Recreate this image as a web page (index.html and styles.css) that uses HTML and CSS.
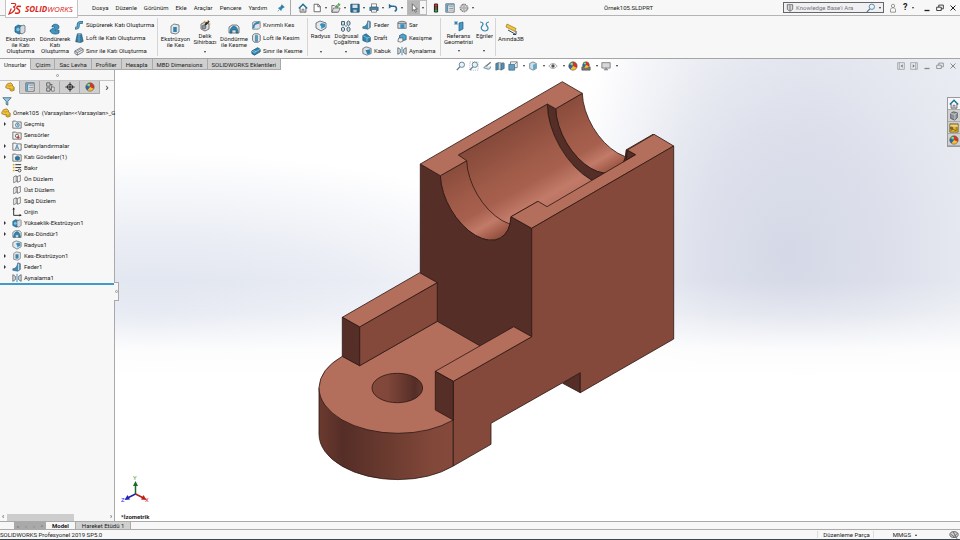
FILE: index.html
```html
<!DOCTYPE html>
<html lang="tr">
<head>
    <meta charset="UTF-8">
    <meta name="viewport" content="width=device-width, initial-scale=1.0">
    <title>Örnek105.SLDPRT</title>
    <link rel="stylesheet" href="styles.css">
</head>
<body>
    <!-- Icon set -->
    <svg class="sprite" aria-hidden="true">
        <symbol id="i-extrude" viewBox="0 0 12 12"><path d="M1 4l3-2 4 1v7l-3 1-4-2z" fill="#2f86b4" stroke="#1c5272" stroke-width=".7"/><path d="M7 3l3-1 1 1v6l-3 2-2-1V4z" fill="#d5dade" stroke="#55606a" stroke-width=".7"/><circle cx="4" cy="6.500" r="1.700" fill="#7fc2e2"/></symbol>
        <symbol id="i-revolve" viewBox="0 0 12 12"><path d="M3 3c2-3 7-2 7 1 0 2-2 3-4 3 0 1 2 1 4 0v3c-3 2-8 1-9-2 0-2 3-2 5-4-1-1-2 0-3 0z" fill="#3d96c4" stroke="#1c5272" stroke-width=".7"/></symbol>
        <symbol id="i-sweep" viewBox="0 0 12 12"><path d="M1.500 9.500c4 1 3.500-2 3.500-4s2-3 5.500-2.500" fill="none" stroke="#1c5272" stroke-width="3.400"/><path d="M2 9.500c3.500 1 3-2 3-4s2-3 5-2.500" fill="none" stroke="#55a9d2" stroke-width="2"/></symbol>
        <symbol id="i-loft" viewBox="0 0 12 12"><path d="M4 1h5l2 9-3 1.500-6-1z" fill="#357fa6" stroke="#1c4460" stroke-width=".7"/><path d="M4 1l2 1 3-1M6 2v9" stroke="#9fd0e8" stroke-width=".7" fill="none"/></symbol>
        <symbol id="i-boundary" viewBox="0 0 12 12"><path d="M1 6l7-4 3 2v3l-7 4-3-2zM1 6l3 2 7-4M4 8v3" fill="#e6e8ea" stroke="#5a6066" stroke-width=".9"/><path d="M3 6.500l6-3.500" stroke="#5a6066" stroke-width=".7"/></symbol>
        <symbol id="i-cut" viewBox="0 0 12 12"><path d="M2 3l3-2 5 1v7l-3 2-5-1z" fill="#e3e6e8" stroke="#636b72" stroke-width=".8"/><path d="M4 4h4v5H4z" fill="#4f9ec6"/><path d="M6 4v5" stroke="#26607f"/></symbol>
        <symbol id="i-hole" viewBox="0 0 12 12"><path d="M2 4l4-2 4 2v5l-4 2-4-2z" fill="#dcdfe2" stroke="#555" stroke-width=".8"/><circle cx="5" cy="7" r="2" fill="#8e979e" stroke="#444" stroke-width=".6"/><path d="M6 5l4-4" stroke="#26292c" stroke-width="2"/><path d="M8 1l1 1M10 4h1.500M5 1l1 1" stroke="#eb9d2f" stroke-width="1.200"/></symbol>
        <symbol id="i-cutrev" viewBox="0 0 12 12"><path d="M1 4l3-2h5l2 2v6H1z" fill="#dfe3e6" stroke="#566" stroke-width=".8"/><path d="M2 10c0-9 8-9 8 0H8V7H4v3z" fill="#2f86b4" stroke="#1c5272" stroke-width=".6"/></symbol>
        <symbol id="i-cutsweep" viewBox="0 0 12 12"><path d="M2 3l2-1h7v7l-2 2H2z" fill="#dfe3e6" stroke="#58646d" stroke-width=".8"/><path d="M3 10c0-5 2-6 7-7" fill="none" stroke="#2f86b4" stroke-width="2.200"/></symbol>
        <symbol id="i-cutloft" viewBox="0 0 12 12"><path d="M2 3l2-2h5l2 2v6l-2 2H4L2 9z" fill="#f1f2f3" stroke="#4c5358"/><path d="M5 3h3v7H5z" fill="#4f9ec6" stroke="#26607f" stroke-width=".5"/></symbol>
        <symbol id="i-cutbound" viewBox="0 0 12 12"><path d="M1 6l7-4 3 2v3l-7 4-3-2z" fill="#2f86b4" stroke="#1c4d69" stroke-width=".9"/><path d="M1 6l3 2 7-4M3 5l3 2" stroke="#a8d9ef" stroke-width=".8" fill="none"/></symbol>
        <symbol id="i-fillet" viewBox="0 0 12 12"><path d="M1 3l4-2 6 2v5l-5 3-5-3z" fill="#e5e8ea" stroke="#525a60" stroke-width=".8"/><path d="M5 5c0-2 3-2 5-1v3L6 9c1-2 0-3-1-4z" fill="#2f8fbe"/></symbol>
        <symbol id="i-pattern" viewBox="0 0 12 12"><g fill="#c8dce7" stroke="#3e5664" stroke-width=".9"><path d="M1.500 1.500h3v3.500h-3zM7 2l1.500-1L10 2v2.500L8.500 5.500 7 4.500zM1.500 8L3 7l1.500 1v2.500L3 11.500l-1.500-1zM7 8l1.500-1L10 8v2.500l-1.500 1-1.500-1z"/></g><path d="M5 6h2" stroke="#2f86b4"/></symbol>
        <symbol id="i-rib" viewBox="0 0 12 12"><path d="M7 1l3 1v7l-3 2-6-1V8c3 0 5-2 6-7z" fill="#3b8eb8" stroke="#3f5665" stroke-width=".7"/><path d="M8 2v8" stroke="#d2dde4" stroke-width="1.300"/></symbol>
        <symbol id="i-draft" viewBox="0 0 12 12"><path d="M1 3l4-2 5 4v5l-4 1-5-2z" fill="#2e85b1" stroke="#1f4d66" stroke-width=".8"/><path d="M1 3l5 3v5M6 6l4-1" fill="none" stroke="#a4d0e5" stroke-width=".8"/></symbol>
        <symbol id="i-shell" viewBox="0 0 12 12"><path d="M1 3l4-2 6 2v6l-5 2-5-2z" fill="#dfe3e6" stroke="#3e4b54" stroke-width=".8"/><path d="M4 5l6-1v5L6 10c0-3-1-3-2-5z" fill="#2882b0"/></symbol>
        <symbol id="i-wrap" viewBox="0 0 12 12"><path d="M1 3c2-2 8-2 10 0v7H1z" fill="#d1d7db" stroke="#444f57" stroke-width=".8"/><path d="M4 5h5v5H4z" fill="#3990bc"/><path d="M1 4h10" stroke="#444f57" stroke-width=".8"/></symbol>
        <symbol id="i-intersect" viewBox="0 0 12 12"><path d="M3 3l4-2 4 2v5l-3 1-5-1z" fill="#4fa3cc" stroke="#225672" stroke-width=".8"/><path d="M2 6h5v4l-3 1-3-1z" fill="#eef0f1" stroke="#4b5358" stroke-width=".8"/></symbol>
        <symbol id="i-mirror" viewBox="0 0 12 12"><path d="M1 2v8l3-2V4zM11 2v8L8 8V4z" fill="#dce1e4" stroke="#46545e" stroke-width=".9"/><path d="M6 1v10" stroke="#267ba8"/></symbol>
        <symbol id="i-ref" viewBox="0 0 12 12"><path d="M6 3l4-1v7l-4 2z" fill="#4599c4" stroke="#1f5f82" stroke-width=".7"/><path d="M1 3h4M3 1v4M1.500 1.500l3 3M4.500 1.500l-3 3" stroke="#2778a2" stroke-width=".8"/></symbol>
        <symbol id="i-curve" viewBox="0 0 12 12"><path d="M2 2c3 0 4 2 2 4s0 5 3 5 4-3 2-5 0-4 2-4" fill="none" stroke="#3386b0" stroke-width="1.200"/></symbol>
        <symbol id="i-instant" viewBox="0 0 12 12"><path d="M2 1l9 4.500-1 3L1 4z" fill="#f2c43c" stroke="#866510" stroke-width=".6"/><path d="M3 7l7 4M11 8v3.500H8" fill="none" stroke="#2d485a"/></symbol>
        <symbol id="i-home" viewBox="0 0 12 12"><path d="M2.500 6v5h7V6" fill="#f3f3f3" stroke="#444" stroke-width=".9"/><path d="M1 6.500L6 1.500l5 5" fill="none" stroke="#1f6f99" stroke-width="1.800"/><path d="M5 11V7.500h2V11" fill="#fff" stroke="#444" stroke-width=".8"/></symbol>
        <symbol id="i-new" viewBox="0 0 12 12"><path d="M2.500 1.500h5l2.500 2.500v6.500H2.500zM7 1.500v3h3" fill="#fff" stroke="#555"/></symbol>
        <symbol id="i-open" viewBox="0 0 12 12"><path d="M1 3h3l1 1h3v7H1z" fill="#eee" stroke="#555" stroke-width=".9"/><path d="M3 6h8l-2 5H1z" fill="#ddd" stroke="#555" stroke-width=".8"/><path d="M6 6c0-3 1-4 4-4M8.500.5L11 2 8.500 4" fill="none" stroke="#3a9c32" stroke-width="1.200"/></symbol>
        <symbol id="i-save" viewBox="0 0 12 12"><path d="M1 1.500h10v9.500H1z" fill="#2d7199" stroke="#234e68"/><path d="M3 2h6v4H3z" fill="#d9e1e6"/><path d="M4 8h4v3H4z" fill="#b8c6cf"/></symbol>
        <symbol id="i-print" viewBox="0 0 12 12"><path d="M3 1h6v4H3z" fill="#fff" stroke="#555" stroke-width=".8"/><path d="M1 5h10v4H1z" fill="#3f88b0" stroke="#2b566f" stroke-width=".8"/><path d="M3 8h6v3H3z" fill="#fff" stroke="#555" stroke-width=".8"/></symbol>
        <symbol id="i-undo" viewBox="0 0 12 12"><path d="M2 4h5c4 0 4 5 1 6" fill="none" stroke="#2a6c93" stroke-width="1.900"/><path d="M1 1v6l4-3z" fill="#2a6c93"/></symbol>
        <symbol id="i-cursor" viewBox="0 0 12 12"><path d="M4 1v8.500l2-1.800L7.500 11l1.300-.6L7.300 7.300H10z" fill="#fff" stroke="#444" stroke-width=".8"/></symbol>
        <symbol id="i-light" viewBox="0 0 12 12"><rect x="3.500" y=".5" width="5" height="11" rx="1.500" fill="#23282b"/><circle cx="6" cy="3" r="1.500" fill="#e2332c"/><circle cx="6" cy="6" r="1.100" fill="#8d7d25"/><circle cx="6" cy="9" r="1.500" fill="#3bb04a"/></symbol>
        <symbol id="i-list" viewBox="0 0 12 12"><path d="M1 1h10v10H1z" fill="#fff" stroke="#4e5960"/><path d="M1.500 1.500H4v9H1.500zM4 1.500h6.500V3H4z" fill="#5b92b1"/><path d="M5 4.500h5M5 6.500h5M5 8.500h5" stroke="#4e5960" stroke-width=".8"/></symbol>
        <symbol id="i-gear" viewBox="0 0 12 12"><circle cx="6" cy="6" r="4.600" fill="none" stroke="#666" stroke-width="1.200" stroke-dasharray="2 .7"/><circle cx="6" cy="6" r="3.500" fill="#eee" stroke="#777" stroke-width=".7"/><circle cx="6" cy="6" r="1.500" fill="#fff" stroke="#555" stroke-width=".8"/></symbol>
        <symbol id="i-pin" viewBox="0 0 12 12"><path d="M7 2l3 3-1 .5-2 1-1 2.500-3-3 2.500-1 1-2zM4 8L2 10" fill="#2b7eab" stroke="#2b7eab" stroke-width=".8"/></symbol>
        <symbol id="i-part" viewBox="0 0 12 12"><path d="M1 5l2-3 4-1 2 2v2l2 1v4l-3 1-2-1V8H4L1 7z" fill="#eec03c" stroke="#8d6911" stroke-width=".8"/><path d="M3 4l2 1 3-1M6 8l2 1 3-1" fill="none" stroke="#a67c17" stroke-width=".7"/></symbol>
        <symbol id="i-config" viewBox="0 0 12 12"><path d="M2 1h4v4H2zM2 7h4v4H2zM6 3h3M6 9h2V4" fill="none" stroke="#555"/><path d="M8 6h3v5H8z" fill="#eee" stroke="#555" stroke-width=".8"/></symbol>
        <symbol id="i-target" viewBox="0 0 12 12"><circle cx="6" cy="6" r="3.200" fill="none" stroke="#222"/><path d="M6 .5v11M.5 6h11" stroke="#222" stroke-width="1.200"/></symbol>
        <symbol id="i-ball" viewBox="0 0 12 12"><circle cx="6" cy="6" r="5" fill="#f0c22e"/><path d="M6 6L1.500 4A5 5 0 0 1 6 1z" fill="#2f9c49"/><path d="M6 6V1a5 5 0 0 1 4.500 7z" fill="#d9322b"/><path d="M6 6L1.500 4A5 5 0 0 0 3 10z" fill="#2b64b6"/><circle cx="6" cy="6" r="5" fill="none" stroke="#555" stroke-width=".7"/><ellipse cx="4.500" cy="3.500" rx="1.600" ry="1" fill="#fff" opacity=".6"/></symbol>
        <symbol id="i-filter" viewBox="0 0 12 12"><path d="M1 2h10L7 6.500V11L5 10V6.500z" fill="#93c5df" stroke="#3b5f74" stroke-width=".9"/></symbol>
        <symbol id="i-folder" viewBox="0 0 12 12"><path d="M1 2.500h3.500l1 1H11V11H1z" fill="#f2f2f2" stroke="#555" stroke-width=".9"/></symbol>
        <symbol id="i-history" viewBox="0 0 12 12"><use href="#i-folder"/><circle cx="6.500" cy="7.200" r="2.400" fill="#c9e2ef" stroke="#2a7198" stroke-width=".8"/><path d="M6.500 5.500v2h1.500" fill="none" stroke="#2a7198" stroke-width=".8"/></symbol>
        <symbol id="i-sensor" viewBox="0 0 12 12"><use href="#i-folder"/><circle cx="6" cy="7" r="2" fill="none" stroke="#333" stroke-width=".8"/><circle cx="7.500" cy="9" r="1.500" fill="#d6362d"/></symbol>
        <symbol id="i-note" viewBox="0 0 12 12"><use href="#i-folder"/><path d="M4 10l2-5.500L8 10M4.700 8.300h2.600" fill="none" stroke="#2377a5" stroke-width=".9"/></symbol>
        <symbol id="i-bodies" viewBox="0 0 12 12"><use href="#i-folder"/><path d="M4 6l2.500-1L9 6v3l-2.500 1L4 9z" fill="#2377a5" stroke="#174b69" stroke-width=".6"/></symbol>
        <symbol id="i-material" viewBox="0 0 12 12"><path d="M1 2h2M1 5.500h2M1 9h2" stroke="#dfa520" stroke-width="1.800"/><path d="M4 2h7M4 5.500h7M4 9h3" stroke="#333" stroke-width="1.200"/><circle cx="9" cy="9" r="1.700" fill="#eee" stroke="#333"/></symbol>
        <symbol id="i-plane" viewBox="0 0 12 12"><path d="M2 3.500l3-1.500v7L2 10.500zM5 3h1.500M5 8.500h1.500M6.500 3L10 1.500v7L6.500 10z" fill="none" stroke="#666" stroke-width=".9"/></symbol>
        <symbol id="i-origin" viewBox="0 0 12 12"><path d="M2 1v9h9" fill="none" stroke="#222" stroke-width="1.100"/><path d="M.5 3L2 .5 3.500 3zM9 8.500l2.500 1.500L9 11.500z" fill="#222"/></symbol>
        <symbol id="i-search" viewBox="0 0 12 12"><circle cx="7" cy="4.500" r="3.200" fill="#e8f2f8" stroke="#5a7f96" stroke-width="1.100"/><path d="M4.600 7L1 11" stroke="#5a7f96" stroke-width="1.600"/></symbol>
        <symbol id="i-zoomarea" viewBox="0 0 12 12"><path d="M1 1h10v10H1z" fill="none" stroke="#aaa" stroke-width=".8" stroke-dasharray="1.500 1"/><use href="#i-search"/></symbol>
        <symbol id="i-prev" viewBox="0 0 12 12"><path d="M10.500 1.500L5 6" stroke="#777" stroke-width="1.600"/><path d="M10 6.500c1 3-2 4-4 3L2 8l3-2.500 1 1.500" fill="#cfe2ec" stroke="#5a7c90"/></symbol>
        <symbol id="i-section" viewBox="0 0 12 12"><path d="M1 3l3-1v8l-3 1zM7 3l3-1 1 1v6l-4 2z" fill="#4f94b8" stroke="#44586a" stroke-width=".8"/><path d="M4 2h3v8H4z" fill="#c8d8e0" stroke="#44586a" stroke-width=".6"/></symbol>
        <symbol id="i-orient" viewBox="0 0 12 12"><path d="M1 4h7v7H1z" fill="#5da1c5" stroke="#44586a" stroke-width=".8"/><path d="M3 4V1h8v7H8M8 4l3-3" fill="none" stroke="#59636b" stroke-width=".9"/></symbol>
        <symbol id="i-cube" viewBox="0 0 12 12"><path d="M2 3l4-2 4 2v6l-4 2-4-2z" fill="#cfdfe8" stroke="#566873" stroke-width=".8"/><path d="M6 4.500L10 3v6l-4 2z" fill="#67a9ca"/></symbol>
        <symbol id="i-eye" viewBox="0 0 12 12"><path d="M1 6c3-4 7-4 10 0-3 4-7 4-10 0z" fill="#f5f5f5" stroke="#888" stroke-width=".8"/><circle cx="6" cy="6" r="2" fill="#555"/></symbol>
        <symbol id="i-scene" viewBox="0 0 12 12"><path d="M1 7h10v4H1z" fill="#777" stroke="#444" stroke-width=".7"/><g transform="scale(.8) translate(1.500 0)"><use href="#i-ball"/></g></symbol>
        <symbol id="i-screen" viewBox="0 0 12 12"><path d="M1 2h10v6.500H1z" fill="#d5d8da" stroke="#666" stroke-width=".9"/><path d="M6 8v2.500M3.500 10.500h5" stroke="#666"/></symbol>
        <symbol id="i-paneleft" viewBox="0 0 12 12"><path d="M2 2h8v8H2zM4 2v8" fill="none" stroke="#999" stroke-width=".9"/><path d="M8 4L5.500 6 8 8z" fill="#777"/></symbol>
        <symbol id="i-paneright" viewBox="0 0 12 12"><path d="M2 2h8v8H2zM8 2v8" fill="none" stroke="#999" stroke-width=".9"/><path d="M4.500 4L7 6 4.500 8z" fill="#777"/></symbol>
        <symbol id="i-min" viewBox="0 0 12 12"><path d="M3 9h6" stroke="currentColor" stroke-width="1.600"/></symbol>
        <symbol id="i-restore" viewBox="0 0 12 12"><path d="M2 5h5.500v4H2zM4.500 5V2.500H10V7H7.500" fill="none" stroke="currentColor"/></symbol>
        <symbol id="i-close" viewBox="0 0 12 12"><path d="M3 3l6 6M9 3l-6 6" stroke="currentColor" stroke-width="1.200"/></symbol>
        <symbol id="i-user" viewBox="0 0 12 12"><circle cx="6" cy="3.500" r="2" fill="none" stroke="#888"/><path d="M3 11V8c0-3 6-3 6 0v3z" fill="none" stroke="#888"/></symbol>
        <symbol id="i-box" viewBox="0 0 12 12"><path d="M2 3l3-2 5 1v6l-3 3-5-2z" fill="#8c9298" stroke="#3e4347" stroke-width=".8"/><path d="M2 3l5 1v7M7 4l3-2" fill="none" stroke="#e8e8e8" stroke-width=".7"/></symbol>
        <symbol id="i-book" viewBox="0 0 12 12"><path d="M1 1h10v10H1z" fill="#e6b42b" stroke="#6d5818" stroke-width=".9"/><path d="M1.500 3.500h9" stroke="#ddd" stroke-width="1.500"/><path d="M2 5h2v2H2zM8 6h2M2 9l3-2 2 2 3-1" stroke="#4e4630" fill="none"/></symbol>
        <symbol id="i-kb" viewBox="0 0 12 12"><path d="M2 1h8v7l-4 3-4-3z" fill="#ddd" stroke="#444"/><path d="M6 2v8" stroke="#444"/></symbol>
        <symbol id="i-globe" viewBox="0 0 12 12"><ellipse cx="6" cy="5.500" rx="5" ry="3.500" fill="#ccc" stroke="#555"/><path d="M2 5l4 3 4-4M5 2l3 6M8 8l2 3" fill="none" stroke="#555" stroke-width=".9"/></symbol>
    </svg>

    <header class="titlebar">
        <a class="logo" href="#">
            <svg class="logo-mark" viewBox="0 0 14 14" aria-hidden="true">
                <path d="M3 1.500h3.500c2 0 1.500 3-1.500 3.500C8.500 5 7 10 1 12l2.300-5.500" fill="none" stroke="#d9261c" stroke-width="1.200"/>
                <path d="M13 4.500c-5-1-5 1.500-3 2.700 3 2 1.500 5-3 3.800" fill="none" stroke="#d9261c" stroke-width="1.400"/>
            </svg>
            <span class="logo-text"><b>SOLID</b>WORKS</span>
        </a>
        <nav class="menu">
            <a href="#">Dosya</a>
            <a href="#">Düzenle</a>
            <a href="#">Görünüm</a>
            <a href="#">Ekle</a>
            <a href="#">Araçlar</a>
            <a href="#">Pencere</a>
            <a href="#">Yardım</a>
        </nav>
        <button class="icon-btn pin" aria-label="Sabitle"><svg><use href="#i-pin"/></svg></button>
        <div class="quick">
            <button class="icon-btn" aria-label="Giriş"><svg><use href="#i-home"/></svg></button>
            <button class="icon-btn has-caret" aria-label="Yeni"><svg><use href="#i-new"/></svg></button>
            <button class="icon-btn has-caret" aria-label="Aç"><svg><use href="#i-open"/></svg></button>
            <button class="icon-btn has-caret" aria-label="Kaydet"><svg><use href="#i-save"/></svg></button>
            <button class="icon-btn has-caret" aria-label="Yazdır"><svg><use href="#i-print"/></svg></button>
            <button class="icon-btn has-caret" aria-label="Geri al"><svg><use href="#i-undo"/></svg></button>
            <button class="icon-btn has-caret selected" aria-label="Seç"><svg><use href="#i-cursor"/></svg></button>
            <button class="icon-btn" aria-label="Yeniden oluştur"><svg><use href="#i-light"/></svg></button>
            <button class="icon-btn" aria-label="Dosya özellikleri"><svg><use href="#i-list"/></svg></button>
            <button class="icon-btn has-caret" aria-label="Seçenekler"><svg><use href="#i-gear"/></svg></button>
        </div>
        <h1 class="doc-title">Örnek105.SLDPRT</h1>
        <div class="search">
            <svg><use href="#i-kb"/></svg>
            <input type="text" aria-label="Knowledge Base'i Ara" placeholder="Knowledge Base'i Ara">
            <button class="icon-btn has-caret" aria-label="Ara"><svg><use href="#i-search"/></svg></button>
        </div>
        <div class="window-controls">
            <button class="icon-btn" aria-label="Oturum aç"><svg><use href="#i-user"/></svg></button>
            <button class="icon-btn has-caret help">?</button>
            <button class="icon-btn" aria-label="Küçült"><svg><use href="#i-min"/></svg></button>
            <button class="icon-btn" aria-label="Geri yükle"><svg><use href="#i-restore"/></svg></button>
            <button class="icon-btn" aria-label="Kapat"><svg><use href="#i-close"/></svg></button>
        </div>
    </header>

    <section class="ribbon">
        <div class="group group-boss">
            <button class="tool low"><svg><use href="#i-extrude"/></svg>Ekstrüzyon<br>ile Katı<br>Oluşturma</button>
            <button class="tool low"><svg><use href="#i-revolve"/></svg>Döndürerek<br>Katı<br>Oluşturma</button>
            <div class="stack">
                <button><svg><use href="#i-sweep"/></svg>Süpürerek Katı Oluşturma</button>
                <button><svg><use href="#i-loft"/></svg>Loft ile Katı Oluşturma</button>
                <button><svg><use href="#i-boundary"/></svg>Sınır ile Katı Oluşturma</button>
            </div>
        </div>
        <div class="group group-cut">
            <button class="tool low"><svg><use href="#i-cut"/></svg>Ekstrüzyon<br>ile Kes</button>
            <button class="tool more"><svg><use href="#i-hole"/></svg>Delik<br>Sihirbazı</button>
            <button class="tool low"><svg><use href="#i-cutrev"/></svg>Döndürme<br>ile Kesme</button>
            <div class="stack">
                <button><svg><use href="#i-cutsweep"/></svg>Kıvrımlı Kes</button>
                <button><svg><use href="#i-cutloft"/></svg>Loft ile Kesim</button>
                <button><svg><use href="#i-cutbound"/></svg>Sınır ile Kesme</button>
            </div>
        </div>
        <div class="group group-feature">
            <button class="tool more"><svg><use href="#i-fillet"/></svg>Radyus</button>
            <button class="tool more"><svg><use href="#i-pattern"/></svg>Doğrusal<br>Çoğaltma</button>
            <div class="stack">
                <button><svg><use href="#i-rib"/></svg>Feder</button>
                <button><svg><use href="#i-draft"/></svg>Draft</button>
                <button><svg><use href="#i-shell"/></svg>Kabuk</button>
            </div>
            <div class="stack">
                <button><svg><use href="#i-wrap"/></svg>Sar</button>
                <button><svg><use href="#i-intersect"/></svg>Kesişme</button>
                <button><svg><use href="#i-mirror"/></svg>Aynalama</button>
            </div>
        </div>
        <div class="group group-ref">
            <button class="tool more"><svg><use href="#i-ref"/></svg>Referans<br>Geometrisi</button>
            <button class="tool more"><svg><use href="#i-curve"/></svg>Eğriler</button>
        </div>
        <div class="group group-instant">
            <button class="tool low"><svg><use href="#i-instant"/></svg>Anında3B</button>
        </div>
    </section>

    <main class="workspace">
        <nav class="ribbon-tabs">
            <button class="active">Unsurlar</button>
            <button>Çizim</button>
            <button>Sac Levha</button>
            <button>Profiller</button>
            <button>Hesapla</button>
            <button>MBD Dimensions</button>
            <button>SOLIDWORKS Eklentileri</button>
        </nav>

        <div class="content">
            <aside class="panel">
                <div class="grip"><i></i></div>
                <div class="panel-tabs">
                    <button class="active" aria-label="Unsur ağacı"><svg><use href="#i-part"/></svg></button>
                    <button aria-label="Özellikler"><svg><use href="#i-list"/></svg></button>
                    <button aria-label="Konfigürasyon"><svg><use href="#i-config"/></svg></button>
                    <button aria-label="DimXpert"><svg><use href="#i-target"/></svg></button>
                    <button aria-label="Görüntü"><svg><use href="#i-ball"/></svg></button>
                    <button class="next" aria-label="İleri">›</button>
                </div>
                <label class="filter">
                    <svg><use href="#i-filter"/></svg>
                    <input type="text" aria-label="Filtre">
                </label>
                <ul class="tree">
                    <li class="root"><svg><use href="#i-part"/></svg>Örnek105&nbsp; (Varsayılan&lt;&lt;Varsayılan&gt;_G</li>
                    <li class="parent"><svg><use href="#i-history"/></svg>Geçmiş</li>
                    <li><svg><use href="#i-sensor"/></svg>Sensörler</li>
                    <li class="parent"><svg><use href="#i-note"/></svg>Detaylandırmalar</li>
                    <li class="parent"><svg><use href="#i-bodies"/></svg>Katı Gövdeler(1)</li>
                    <li><svg><use href="#i-material"/></svg>Bakır</li>
                    <li><svg><use href="#i-plane"/></svg>Ön Düzlem</li>
                    <li><svg><use href="#i-plane"/></svg>Üst Düzlem</li>
                    <li><svg><use href="#i-plane"/></svg>Sağ Düzlem</li>
                    <li><svg><use href="#i-origin"/></svg>Orijin</li>
                    <li class="parent"><svg><use href="#i-extrude"/></svg>Yükseklik-Ekstrüzyon1</li>
                    <li class="parent"><svg><use href="#i-cutrev"/></svg>Kes-Döndür1</li>
                    <li><svg><use href="#i-fillet"/></svg>Radyus1</li>
                    <li class="parent"><svg><use href="#i-cut"/></svg>Kes-Ekstrüzyon1</li>
                    <li class="parent"><svg><use href="#i-rib"/></svg>Feder1</li>
                    <li><svg><use href="#i-mirror"/></svg>Aynalama1</li>
                </ul>
                <div class="scrollbar"><span>‹</span><i></i><span>›</span></div>
            </aside>

            <div class="viewport">
                <svg class="model" viewBox="115 70 845 451" role="img" aria-label="Örnek105">
                    <defs>
                        <linearGradient id="lip" gradientUnits="userSpaceOnUse" x1="440" y1="176" x2="482" y2="249">
                            <stop offset="0" stop-color="#8a4c3c"/>
                            <stop offset=".4" stop-color="#a15b49"/>
                            <stop offset=".6" stop-color="#a8604e"/>
                            <stop offset=".78" stop-color="#c27b68"/>
                            <stop offset=".9" stop-color="#a8604e"/>
                            <stop offset="1" stop-color="#8a4c3c"/>
                        </linearGradient>
                        <linearGradient id="bore" gradientUnits="userSpaceOnUse" x1="458" y1="155" x2="508" y2="242">
                            <stop offset="0" stop-color="#85493a"/>
                            <stop offset=".4" stop-color="#9f5a48"/>
                            <stop offset=".6" stop-color="#a8604e"/>
                            <stop offset=".8" stop-color="#c27b68"/>
                            <stop offset="1" stop-color="#b46c5a"/>
                        </linearGradient>
                        <linearGradient id="disc" x1="0" x2="1" y1="0" y2="0">
                            <stop offset="0" stop-color="#6b3a2f"/>
                            <stop offset=".18" stop-color="#552e27"/>
                            <stop offset=".5" stop-color="#6a3a2f"/>
                            <stop offset=".85" stop-color="#82483a"/>
                            <stop offset="1" stop-color="#84493b"/>
                        </linearGradient>
                        <linearGradient id="hole" x1="0" x2="1" y1="0" y2="0">
                            <stop offset="0" stop-color="#84493b"/>
                            <stop offset=".3" stop-color="#81473a"/>
                            <stop offset=".85" stop-color="#552e27"/>
                            <stop offset="1" stop-color="#66382e"/>
                        </linearGradient>
                    </defs>
                    <g class="edges">
                        <!-- bearing seat -->
                        <path fill="url(#lip)" d="M555.700 108.700L582.300 93.300A50 28.900 60 0 0 653 134.300L626.400 149.700A50 28.900 60 0 1 555.700 108.700z"/>
                        <path class="dark" d="M547.300 104L555.700 108.700A50 28.900 60 0 0 626.400 149.700L634.800 154.700A61.900 35.700 60 0 1 547.300 104z"/>
                        <path fill="url(#bore)" d="M458.300 155L547.300 104A61.900 35.700 60 0 0 634.800 154.700L537.400 230 480 240z"/>
                        <path fill="url(#lip)" d="M440.300 175.700L466.700 160.700A50 28.900 60 0 0 537.400 201.700L511 216.700A50 28.900 60 0 1 440.300 175.700z"/>
                        <path class="dark" d="M627.300 150L635.700 154.700 626.300 160z"/>
                        <!-- main block -->
                        <path class="dark" d="M420.300 164L440.300 175.700A50 28.900 60 0 0 511 216.700L531.700 228.300V350H479.700L420.300 316z"/>
                        <path class="light" d="M420.300 164L562.300 81.700 582.300 93.300 555.700 108.700 547.300 104 458.300 155 466.700 160.700 440.300 175.700z"/>
                        <path class="light" d="M511 216.700L538 201.300 547 206.700 635.700 154.700 627.300 150 654 134.300 673.700 146 531.700 228.300z"/>
                        <path class="dark" d="M562.700 383.300L580.300 372.700V392.700z"/>
                        <!-- base -->
                        <path fill="url(#disc)" d="M319 387.700V434A79 45.600 0 0 0 398 479.600 79 45.600 0 0 0 453.300 466V420z"/>
                        <path class="light" d="M342.300 356.300L359.700 365.700 437.300 321.300 479.700 345.700 470 400 453.300 420A79 45.600 0 0 1 398 433.300 79 45.600 0 0 1 319 387.700 79 45.600 0 0 1 342.300 356.300z"/>
                        <ellipse fill="url(#hole)" cx="397.300" cy="388" rx="25.300" ry="14.700"/>
                        <!-- rear wall -->
                        <path class="light" d="M342.300 317.300L419.700 272.700 437.300 282.700 359.700 327z"/>
                        <path class="dark" d="M342.300 317.300L359.700 327V365.700L342.300 356.300z"/>
                        <path class="side" d="M359.700 327L437.300 282.700V321.300L359.700 365.700z"/>
                        <!-- front wall -->
                        <path class="side" d="M531.700 228.300L673.700 146V339L580.300 392.700V372.700L491 423.300V444.300L453.300 466V381.300L531.700 336.700z"/>
                        <path class="light" d="M435.300 371.300L513.700 326.700 531.700 336.700 453.300 381.300z"/>
                        <path class="dark" d="M435.300 371.300L453.300 381.300V420L435.300 410z"/>
                    </g>
                    <!-- triad -->
                    <g class="triad">
                        <path d="M135.500 494V484" stroke="#176b22"/><path d="M133 486l2.500-5 2.500 5z" fill="#176b22"/>
                        <path d="M135.500 494l8 4" stroke="#b31b1b"/><path d="M141 499.500l5.500.5-3-5z" fill="#c01c1c"/>
                        <path d="M135.500 494l-8 4" stroke="#2020a8"/><path d="M130 499.500l-5.500.5 3-5z" fill="#2222b8"/>
                        <text x="133" y="480" fill="#3aa23f">Y</text>
                        <text x="145" y="502" fill="#e02a2a">X</text>
                        <text x="121" y="502" fill="#3737e0">Z</text>
                    </g>
                </svg>
                <button class="flyout" aria-label="Paneli daralt"><i></i></button>
                <span class="view-name">*İzometrik</span>
            </div>
        </div>

        <div class="view-tools">
            <button class="icon-btn" aria-label="Sığdır"><svg><use href="#i-search"/></svg></button>
            <button class="icon-btn" aria-label="Alan yakınlaştır"><svg><use href="#i-zoomarea"/></svg></button>
            <button class="icon-btn" aria-label="Önceki görünüm"><svg><use href="#i-prev"/></svg></button>
            <button class="icon-btn" aria-label="Kesit"><svg><use href="#i-section"/></svg></button>
            <button class="icon-btn has-caret" aria-label="Görünüm yönü"><svg><use href="#i-orient"/></svg></button>
            <button class="icon-btn has-caret" aria-label="Görüntüleme stili"><svg><use href="#i-cube"/></svg></button>
            <button class="icon-btn has-caret" aria-label="Gizle/Göster"><svg><use href="#i-eye"/></svg></button>
            <button class="icon-btn" aria-label="Görünüş düzenle"><svg><use href="#i-ball"/></svg></button>
            <button class="icon-btn has-caret" aria-label="Sahne"><svg><use href="#i-scene"/></svg></button>
            <button class="icon-btn has-caret" aria-label="Görünüm ayarları"><svg><use href="#i-screen"/></svg></button>
        </div>
        <div class="doc-controls">
            <button class="icon-btn" aria-label="Sol bölme"><svg><use href="#i-paneleft"/></svg></button>
            <button class="icon-btn" aria-label="Sağ bölme"><svg><use href="#i-paneright"/></svg></button>
            <button class="icon-btn" aria-label="Belgeyi küçült"><svg><use href="#i-min"/></svg></button>
            <button class="icon-btn" aria-label="Belgeyi geri yükle"><svg><use href="#i-restore"/></svg></button>
            <button class="icon-btn" aria-label="Belgeyi kapat"><svg><use href="#i-close"/></svg></button>
        </div>
        <div class="task-pane">
            <button class="active" aria-label="Kaynaklar"><svg><use href="#i-home"/></svg></button>
            <button aria-label="Tasarım kitaplığı"><svg><use href="#i-box"/></svg></button>
            <button aria-label="Görünüm paleti"><svg><use href="#i-book"/></svg></button>
            <button aria-label="Görünüşler"><svg><use href="#i-ball"/></svg></button>
        </div>
    </main>

    <nav class="sheet-tabs">
        <div class="pager"><button>«</button><button>‹</button><button>›</button><button>»</button></div>
        <button class="active">Model</button>
        <button>Hareket Etüdü 1</button>
    </nav>

    <footer class="status">
        <span class="product">SOLIDWORKS Profesyonel 2019 SP5.0</span>
        <span class="cell">Düzenleme Parça</span>
        <button class="units">MMGS</button>
        <svg><use href="#i-globe"/></svg>
    </footer>
</body>
</html>
```

FILE: styles.css
```css
* {
    box-sizing: border-box;
}

body {
    margin: 0;
    height: 100vh;
    display: flex;
    flex-direction: column;
    overflow: hidden;
    background: #f7f7f7;
    color: #222;
    font-family: Roboto, "Open Sans", sans-serif;
    font-size: 6px;
    line-height: 7px;
    white-space: nowrap;
}

button,
input {
    margin: 0;
    padding: 0;
    border: 0;
    background: none;
    color: inherit;
    font: inherit;
}

a {
    color: inherit;
    text-decoration: none;
}

svg {
    width: 10px;
    height: 10px;
    flex: none;
    display: block;
}

.sprite {
    position: absolute;
    width: 0;
    height: 0;
}

/* Title bar */
.titlebar {
    flex: none;
    height: 16px;
    display: flex;
    align-items: center;
    border-bottom: 1px solid #b4b4b4;
}

.logo {
    position: relative;
    align-self: flex-start;
    flex: none;
    width: 73px;
    height: 18px;
    margin-left: 5px;
    padding: 0 2px;
    display: flex;
    align-items: center;
    gap: 3px;
    background: #fff;
    border: 1px solid #c4c4c4;
    border-top: 0;
    color: #d9261c;
}

.logo-mark {
    width: 14px;
    height: 14px;
}

.logo-text {
    font-family: "Open Sans", sans-serif;
    font-size: 8px;
    font-style: italic;
}

.menu {
    display: flex;
    gap: 7px;
    margin-left: 14px;
}

.icon-btn {
    display: flex;
    align-items: center;
    gap: 3px;
}

.has-caret::after {
    content: "";
    border: 1px solid transparent;
    border-top: 2px solid #333;
    border-bottom: 0;
}

.pin {
    margin-left: 9px;
    padding-right: 4px;
}

.quick {
    display: flex;
    align-items: center;
    align-self: stretch;
    gap: 4px;
    padding-left: 7px;
    border-left: 1px solid #aaa;
}

.quick .selected {
    align-self: stretch;
    padding-right: 2px;
    border: 1px solid #bbb;
    background: linear-gradient(90deg, #b5b5b5 12px, #f5f5f5 12px);
}

.quick .selected svg {
    margin-left: 1px;
}

.doc-title {
    flex: 1;
    margin: 0;
    text-align: center;
    font-size: 6px;
    font-weight: 400;
}

.search {
    display: flex;
    align-items: center;
    width: 101px;
    height: 11px;
    padding: 0 2px;
    gap: 2px;
    border: 1px solid #666;
    background: #f0f0f4;
}

.search input {
    flex: 1;
    min-width: 0;
}

.search > svg {
    width: 8px;
    height: 8px;
}

.window-controls {
    display: flex;
    align-items: center;
    gap: 3px;
    padding: 0 2px 0 4px;
}

.help {
    width: 18px;
    padding-left: 2px;
    font-size: 9px;
    font-weight: 700;
    gap: 5px;
}

/* Ribbon */
.ribbon {
    flex: none;
    height: 43px;
    display: flex;
    padding: 2px 0 2px 3px;
    border-bottom: 1px solid #a5a5a5;
}

.group {
    display: grid;
    gap: 2px;
    padding: 0 2px;
    border-right: 1px solid #d5d5d5;
}

.group:last-child {
    border: 0;
}

.group-boss {
    grid-template-columns: 31px 34px 81px;
}

.group-cut {
    grid-template-columns: 31px 24px 30px 54px;
}

.group-feature {
    grid-template-columns: 21px 27px 33px 41px;
}

.group-ref {
    grid-template-columns: 31px 17px;
}

.tool {
    position: relative;
    display: flex;
    flex-direction: column;
    align-items: center;
    justify-self: center;
    padding-top: 2px;
    line-height: 6px;
}

.tool svg {
    width: 12px;
    height: 12px;
    margin-bottom: 1px;
}

.low {
    padding-top: 5px;
}

.more::after {
    content: "";
    position: absolute;
    bottom: 4px;
    border: 1px solid transparent;
    border-top: 2px solid #333;
    border-bottom: 0;
}

.stack {
    display: grid;
    grid-template-rows: repeat(3, 13px);
}

.stack button {
    display: flex;
    align-items: center;
    gap: 2px;
}

/* Workspace */
.workspace {
    position: relative;
    flex: 1;
    min-height: 0;
    display: flex;
    flex-direction: column;
    background:
        linear-gradient(180deg, rgba(255, 255, 255, 0) 48%, rgba(255, 255, 255, .3) 55%, rgba(255, 255, 255, .9) 63%, #fff 69%),
        radial-gradient(ellipse 240px 300px at 82% 42%, rgba(210, 214, 229, .9), rgba(210, 214, 229, .6) 40%, rgba(210, 214, 229, .2) 75%, rgba(210, 214, 229, 0)),
        radial-gradient(ellipse 480px 170px at 16% 57%, #dce1ed, rgba(220, 225, 237, .6) 50%, rgba(220, 225, 237, 0)),
        linear-gradient(90deg, rgba(232, 234, 241, 0) 62%, rgba(232, 234, 241, .6) 74%, #ebedf3 84%),
        #fff;
}

.ribbon-tabs {
    display: flex;
    align-self: flex-start;
    height: 11px;
}

.ribbon-tabs button {
    padding: 0 4px;
    border: 1px solid #a9a9a9;
    border-width: 0 1px 1px 0;
    background: #cfcfcf;
}

.ribbon-tabs .active {
    background: #f7f7f7;
    border-bottom-color: #f7f7f7;
}

.content {
    flex: 1;
    min-height: 0;
    display: flex;
}

.panel {
    flex: none;
    width: 115px;
    display: flex;
    flex-direction: column;
    background: #f7f7f7;
    border-right: 1px solid #a9a9a9;
}

.grip {
    height: 11px;
    display: grid;
    place-items: center;
    border-bottom: 1px solid #c4c4c4;
}

.grip i,
.flyout i {
    width: 3px;
    height: 3px;
    border: 1px solid #999;
    border-radius: 50%;
}

.panel-tabs {
    display: flex;
    height: 13px;
}

.panel-tabs button {
    width: 20px;
    display: grid;
    place-items: center;
    border: 1px solid #aaa;
    border-width: 0 1px 1px 0;
    background: #cfcfcf;
}

.panel-tabs .active {
    background: #f7f7f7;
    border-bottom-color: #f7f7f7;
}

.panel-tabs .next {
    flex: 1;
    border: 0;
    background: none;
    font-size: 11px;
}

.filter {
    display: flex;
    align-items: center;
    height: 13px;
    padding: 0 2px;
}

.filter input {
    flex: 1;
    min-width: 0;
    height: 11px;
    margin-left: 2px;
}

.tree {
    flex: 1;
    margin: 0;
    padding: 0;
    list-style: none;
}

.tree li {
    display: flex;
    align-items: center;
    gap: 2px;
    height: 11px;
    padding-left: 12px;
}

.tree .root {
    padding-left: 1px;
}

.tree .parent {
    padding-left: 4px;
}

.tree .parent::before {
    content: "";
    margin-right: 4px;
    border: 2px solid transparent;
    border-left-color: #333;
    border-right: 0;
}

.tree li:last-child {
    height: 13px;
    border-bottom: 2px solid #3f9bc8;
}

.scrollbar {
    display: flex;
    align-items: center;
    justify-content: space-between;
    height: 8px;
    padding: 0 2px;
    font-size: 7px;
}

.scrollbar i {
    width: 67px;
    height: 7px;
    margin: 0 auto 0 3px;
    background: #cdcdcd;
}

/* Graphics area */
.viewport {
    position: relative;
    flex: 1;
    min-width: 0;
}

.model {
    width: 100%;
    height: 100%;
}

.edges {
    stroke: #2b1713;
    stroke-width: .8;
    stroke-linejoin: round;
}

.light {
    fill: #b46e5c;
}

.dark {
    fill: #552e27;
}

.side {
    fill: #84493b;
}

.triad {
    stroke-width: 1.500;
    font-size: 6px;
}

.flyout {
    position: absolute;
    left: -1px;
    top: 47%;
    width: 5px;
    height: 19px;
    display: grid;
    place-items: center;
    border: 1px solid #aaa;
    border-left: 0;
    background: #f7f7f7;
}

.view-name {
    position: absolute;
    left: 6px;
    bottom: 1px;
    font-weight: 700;
}

.view-tools {
    position: absolute;
    top: 2px;
    left: 456px;
    display: flex;
    gap: 3px;
}

.view-tools .has-caret {
    gap: 5px;
}

.doc-controls {
    position: absolute;
    top: 2px;
    right: 2px;
    display: flex;
    gap: 3px;
    color: #888;
}

.task-pane {
    position: absolute;
    top: 38px;
    right: 0;
    border: 1px solid #999;
    border-right: 0;
}

.task-pane button {
    display: grid;
    place-items: center;
    width: 12px;
    height: 12px;
    background: #d0d0d0;
    border-bottom: 1px solid #aaa;
}

.task-pane .active {
    background: #f7f7f7;
}

/* Bottom bars */
.sheet-tabs {
    flex: none;
    display: flex;
    height: 9px;
    padding-left: 14px;
    border-top: 1px solid #aaa;
    border-bottom: 1px solid #aaa;
}

.sheet-tabs > button {
    padding: 0 6px;
    background: #d0d0d0;
    border-right: 1px solid #aaa;
}

.sheet-tabs > .active {
    background: #f7f7f7;
    font-weight: 700;
}

.pager {
    display: grid;
    grid-template-columns: repeat(4, 8px);
    background: #a9a9a9;
    color: #777;
}

.status {
    flex: none;
    display: flex;
    align-items: center;
    height: 10px;
    padding-right: 1px;
    border-bottom: 1px solid #3b4650;
}

.product {
    flex: 1;
}

.cell {
    padding: 0 3px 0 5px;
    border: 1px solid #ddd;
    border-width: 0 1px;
}

.units {
    display: flex;
    align-items: center;
    gap: 4px;
    margin: 0 32px 0 19px;
}

.units::after {
    content: "";
    border: 1px solid transparent;
    border-bottom: 2px solid #333;
    border-top: 0;
}
```
